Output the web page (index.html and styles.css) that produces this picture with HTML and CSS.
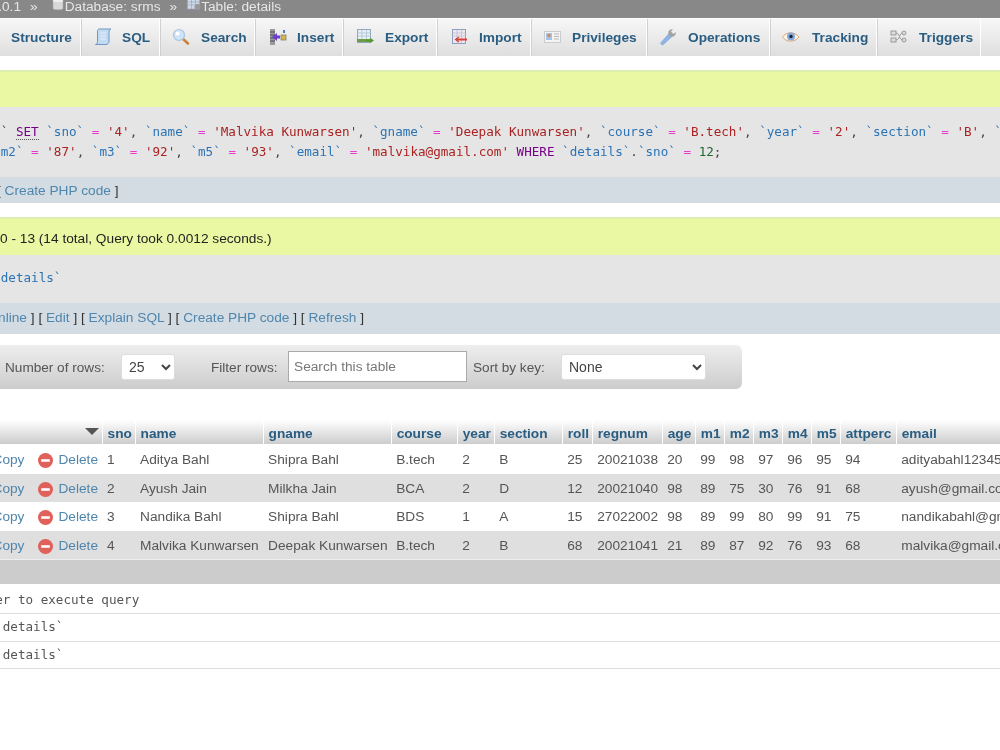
FILE: index.html
```html
<!DOCTYPE html>
<html lang="en">
<head>
<meta charset="utf-8">
<title>phpMyAdmin - details</title>
<link rel="stylesheet" href="styles.css">
</head>
<body>
<div class="page">
  <div class="crumbs">
    <span class="crumb-text first-crumb">Server: 127.0.0.1</span>
    <span class="crumb-sep">»</span>
    <svg class="crumb-icon" viewBox="0 0 14 14"><path d="M2 2.500C2 .8 12 .8 12 2.500v8c0 1.700-10 1.700-10 0z" fill="#d8d8d8" stroke="#aaa" stroke-width=".6"/><ellipse cx="7" cy="2.500" rx="5" ry="1.500" fill="#eee"/></svg>
    <span class="crumb-text">Database: srms</span>
    <span class="crumb-sep sep2">»</span>
    <svg class="crumb-icon tbl" viewBox="0 0 14 14"><rect x=".5" y="1" width="12" height="10" fill="#cfd8e6" stroke="#9ab" stroke-width=".7"/><path d="M.5 4h12M.5 7h12M4.500 1v10M8.500 1v10" stroke="#8fa3c0" stroke-width=".6"/><circle cx="10.500" cy="9" r="3" fill="#999"/></svg>
    <span class="crumb-text">Table: details</span>
  </div>

  <nav class="tabs">
    <a class="tab first">Structure</a>
    <a class="tab t-sql"><svg class="ti" viewBox="0 0 18 18"><path d="M5 1h12c-1 .5-2 1.500-2 3v9c0 2-1 3.500-3 3.500H1.500c1.500-.5 2-1.500 2-3V3C3.500 2 4 1.300 5 1z" fill="#c3daf3" stroke="#6d97c4"/><path d="M6 5h6M6 8h6M6 11h6" stroke="#e4effa"/></svg>SQL</a>
    <a class="tab t-search"><svg class="ti" viewBox="0 0 18 18"><path d="M10.500 10.500l5.500 5" stroke="#c8843c" stroke-width="2.600" stroke-linecap="round"/><circle cx="7" cy="7" r="5.500" fill="#cfe4f8" stroke="#a9c4dc" stroke-width="1.200"/><circle cx="5.500" cy="5.500" r="2" fill="#fff"/></svg>Search</a>
    <a class="tab t-insert"><svg class="ti" viewBox="0 0 18 18"><rect x="1" y="1" width="5" height="16" fill="#9a9a9a"/><path d="M1 4h5M1 7h5M1 10h5M1 13h5" stroke="#555"/><path d="M3 9l5-4v2.500h3v3H8V13z" fill="#6a3fd0"/><rect x="12" y="7" width="5" height="5" fill="#d8b84c" stroke="#776" stroke-width=".7"/><rect x="14" y="2" width="2" height="3" fill="#5577cc"/></svg>Insert</a>
    <a class="tab t-export"><svg class="ti" viewBox="0 0 18 18"><rect x="1.500" y="1.500" width="13" height="13" fill="#e6eef6" stroke="#8fa6bd"/><path d="M1.500 5h13M1.500 8h13M6 2v11M10.500 2v11" stroke="#a9bccf" stroke-width=".7"/><rect x="1" y="11" width="14" height="3" fill="#6d9b4a"/><path d="M10 12.500h6M14 10.500l3 2-3 2" stroke="#4e9a2e" fill="none" stroke-width="1.200"/></svg>Export</a>
    <a class="tab t-import"><svg class="ti" viewBox="0 0 18 18"><rect x="1.500" y="1.500" width="13" height="14" fill="#eee8ee" stroke="#8f9fc0"/><path d="M1.500 5h13M1.500 8h13M6 2v13M10.500 2v13" stroke="#b8b8cf" stroke-width=".7"/><path d="M5 11.500h11" stroke="#d6403a" stroke-width="2"/><path d="M8 9l-3.500 2.500L8 14" fill="none" stroke="#d6403a" stroke-width="1.200"/></svg>Import</a>
    <a class="tab t-priv"><svg class="ti" viewBox="0 0 18 18"><rect x=".5" y="3.500" width="16" height="11" fill="#f4f4f4" stroke="#ccc"/><rect x="2" y="5" width="6" height="7" fill="#a9c3e6"/><circle cx="5" cy="7.500" r="1.700" fill="#c98f62"/><path d="M10 6h5M10 8.500h5M10 11h5" stroke="#b6b6b6"/></svg>Privileges</a>
    <a class="tab t-oper"><svg class="ti" viewBox="0 0 18 18"><path d="M2 14.500L10 5.500 13 8.500 4.500 16.500c-1.500 1-3.500-.5-2.500-2z" fill="#8fb4e6" stroke="#7198cf" stroke-width=".5"/><path d="M9.500 6.500C8.500 3 11 .8 14 1.200l-2 2.300 2.500 2.500 2.300-2c.3 3-2 5.300-5 4.700z" fill="#a3a3a3"/></svg>Operations</a>
    <a class="tab t-track"><svg class="ti" viewBox="0 0 18 18"><path d="M.5 9C4 3.500 13 3.500 17 9c-4 5.500-13 5.500-16.500 0z" fill="#fdf4ea" stroke="#dba877"/><circle cx="9" cy="8.500" r="4" fill="#83a8dc"/><circle cx="9" cy="8.500" r="1.700" fill="#223"/></svg>Tracking</a>
    <a class="tab t-trig"><svg class="ti" viewBox="0 0 18 18"><rect x="1" y="3" width="5" height="4" fill="#ddd" stroke="#888" stroke-width=".8"/><rect x="1" y="10" width="5" height="4" fill="#ddd" stroke="#888" stroke-width=".8"/><path d="M6 5c4 0 3 7 7 7M6 12c4 0 3-7 7-7" fill="none" stroke="#999"/><circle cx="14" cy="5" r="2" fill="#ddd" stroke="#888" stroke-width=".8"/><circle cx="14" cy="12" r="2" fill="#ddd" stroke="#888" stroke-width=".8"/></svg>Triggers</a>
  </nav>

  <div class="notice n1"></div>
  <div class="sql s1"><pre class="code">UPDATE `details` <span class="kw u">SET</span> <span class="id">`sno`</span> <span class="op">=</span> <span class="str">'4'</span>, <span class="id">`name`</span> <span class="op">=</span> <span class="str">'Malvika Kunwarsen'</span>, <span class="id">`gname`</span> <span class="op">=</span> <span class="str">'Deepak Kunwarsen'</span>, <span class="id">`course`</span> <span class="op">=</span> <span class="str">'B.tech'</span>, <span class="id">`year`</span> <span class="op">=</span> <span class="str">'2'</span>, <span class="id">`section`</span> <span class="op">=</span> <span class="str">'B'</span>, <span class="id">`roll`</span>
 <span class="id">`m1` = '89', `m2`</span> <span class="op">=</span> <span class="str">'87'</span>, <span class="id">`m3`</span> <span class="op">=</span> <span class="str">'92'</span>, <span class="id">`m5`</span> <span class="op">=</span> <span class="str">'93'</span>, <span class="id">`email`</span> <span class="op">=</span> <span class="str">'malvika@gmail.com'</span> <span class="kw">WHERE</span> <span class="id">`details`</span>.<span class="id">`sno`</span> <span class="op">=</span> <span class="num">12</span>;</pre></div>
  <div class="links l1">[ <a>Create PHP code</a> ]</div>
  <div class="gap g1"></div>

  <div class="notice n2"><span class="shift-rows">Showing rows 0 - 13 (14 total, Query took 0.0012 seconds.)</span></div>
  <div class="sql s2"><pre class="code"><span class="kw">SELECT</span> * <span class="kw">FROM</span> <span class="id">`details`</span></pre></div>
  <div class="links l2"><span class="shift-inline">[ <a>Edit inline</a> ] [ <a>Edit</a> ] [ <a>Explain SQL</a> ] [ <a>Create PHP code</a> ] [ <a>Refresh</a> ]</span></div>

  <div class="toolbar">
    <label class="lbl l-rows">Number of rows:</label>
    <select class="sel sel-rows"><option>25</option></select>
    <label class="lbl l-filter">Filter rows:</label>
    <input class="search" placeholder="Search this table">
    <label class="lbl l-sort">Sort by key:</label>
    <select class="sel sel-key"><option>None</option></select>
  </div>

  <table class="data">
    <colgroup>
      <col class="c-act"><col class="c-sno"><col class="c-name"><col class="c-gname"><col class="c-course"><col class="c-year"><col class="c-section"><col class="c-roll"><col class="c-reg"><col class="c-age"><col class="c-m1"><col class="c-m2"><col class="c-m3"><col class="c-m4"><col class="c-m5"><col class="c-att"><col class="c-email">
    </colgroup>
    <thead>
      <tr><th class="sort-th"><span class="tri"></span></th><th>sno</th><th>name</th><th>gname</th><th>course</th><th>year</th><th>section</th><th>roll</th><th>regnum</th><th>age</th><th>m1</th><th>m2</th><th>m3</th><th>m4</th><th>m5</th><th>attperc</th><th>email</th></tr>
    </thead>
    <tbody>
      <tr class="r1"><td class="act"><div class="acts"><a>Copy</a><svg class="del" viewBox="0 0 14 14"><circle cx="7" cy="7" r="7" fill="#e0605a"/><rect x="3" y="5.800" width="8" height="2.400" fill="#fff"/></svg><a>Delete</a></div></td><td>1</td><td>Aditya Bahl</td><td>Shipra Bahl</td><td>B.tech</td><td>2</td><td>B</td><td>25</td><td>20021038</td><td>20</td><td>99</td><td>98</td><td>97</td><td>96</td><td>95</td><td>94</td><td>adityabahl12345@gmail.com</td></tr>
      <tr class="r2"><td class="act"><div class="acts"><a>Copy</a><svg class="del" viewBox="0 0 14 14"><circle cx="7" cy="7" r="7" fill="#e0605a"/><rect x="3" y="5.800" width="8" height="2.400" fill="#fff"/></svg><a>Delete</a></div></td><td>2</td><td>Ayush Jain</td><td>Milkha Jain</td><td>BCA</td><td>2</td><td>D</td><td>12</td><td>20021040</td><td>98</td><td>89</td><td>75</td><td>30</td><td>76</td><td>91</td><td>68</td><td>ayush@gmail.com</td></tr>
      <tr class="r3"><td class="act"><div class="acts"><a>Copy</a><svg class="del" viewBox="0 0 14 14"><circle cx="7" cy="7" r="7" fill="#e0605a"/><rect x="3" y="5.800" width="8" height="2.400" fill="#fff"/></svg><a>Delete</a></div></td><td>3</td><td>Nandika Bahl</td><td>Shipra Bahl</td><td>BDS</td><td>1</td><td>A</td><td>15</td><td>27022002</td><td>98</td><td>89</td><td>99</td><td>80</td><td>99</td><td>91</td><td>75</td><td>nandikabahl@gmail.com</td></tr>
      <tr class="r4"><td class="act"><div class="acts"><a>Copy</a><svg class="del" viewBox="0 0 14 14"><circle cx="7" cy="7" r="7" fill="#e0605a"/><rect x="3" y="5.800" width="8" height="2.400" fill="#fff"/></svg><a>Delete</a></div></td><td>4</td><td>Malvika Kunwarsen</td><td>Deepak Kunwarsen</td><td>B.tech</td><td>2</td><td>B</td><td>68</td><td>20021041</td><td>21</td><td>89</td><td>87</td><td>92</td><td>76</td><td>93</td><td>68</td><td>malvika@gmail.com</td></tr>
    </tbody>
  </table>
  <div class="table-foot"></div>

  <div class="console">
    <div class="cline"><pre class="code muted">Press Ctrl+Enter to execute query</pre></div>
    <div class="cline tall"><pre class="code muted">SELECT * FROM `details`</pre></div>
    <div class="cline"><pre class="code muted">SELECT * FROM `details`</pre></div>
  </div>
</div>
</body>
</html>
```
FILE: styles.css
```css
html, body { margin: 0; padding: 0; background: #fff; }
body { font-family: "Liberation Sans", Arial, sans-serif; font-size: 13.7px; color: #333; }
.page { width: 1000px; height: 750px; overflow: hidden; background: #fff; filter: blur(0.4px); }
a { color: #4f86ad; }
pre { margin: 0; }

.crumbs { height: 18px; background: #888; color: #e6e6e6; display: flex; align-items: flex-start; line-height: 13px; white-space: nowrap; overflow: hidden; font-size: 13.7px; }
.first-crumb { margin-left: -84px; }
.crumb-sep { margin: 0 13px 0 9px; }
.crumb-sep.sep2 { margin: 0 10px 0 9px; }
.crumb-icon { width: 14px; height: 14px; flex: none; margin-top: -2px; }

.tabs { height: 38px; display: flex; background: linear-gradient(#f7f7f7, #dedede); border-top: 1px solid #fff; box-sizing: border-box; white-space: nowrap; }
.tab { display: flex; align-items: center; font-weight: bold; font-size: 13.7px; color: #2a5d82; border-right: 1px solid #fff; box-shadow: 1px 0 0 #d0d0d0 inset; box-sizing: border-box; padding-bottom: 1px; }
.tab.first { width: 81px; padding-left: 11px; box-shadow: none; }
.ti { width: 18px; height: 18px; flex: none; margin-top: -1px; }
.t-sql { width: 79px; padding-left: 13px; gap: 10px; }
.t-search { width: 95px; padding-left: 12px; gap: 11px; }
.t-insert { width: 88px; padding-left: 14px; gap: 10px; }
.t-export { width: 94px; padding-left: 13px; gap: 11px; }
.t-import { width: 94px; padding-left: 14px; gap: 10px; }
.t-priv { width: 116px; padding-left: 13px; gap: 10px; }
.t-oper { width: 123px; padding-left: 12px; gap: 11px; }
.t-track { width: 107px; padding-left: 12px; gap: 12px; }
.t-trig { width: 104px; padding-left: 13px; gap: 11px; }

.notice { background: #eaf8a3; border-top: 2px solid #dcefb0; box-sizing: border-box; color: #222; white-space: nowrap; overflow: hidden; }
.n1 { height: 37px; margin-top: 14px; }
.n2 { height: 38px; line-height: 40px; }
.shift-rows { margin-left: -89px; }

.sql { background: #e5e5e5; overflow: hidden; white-space: nowrap; }
.s1 { height: 70px; padding-top: 15px; box-sizing: border-box; }
.s2 { height: 48px; padding-top: 13px; box-sizing: border-box; }
.code { font-family: "DejaVu Sans Mono", "Liberation Mono", monospace; font-size: 12.6px; line-height: 20px; margin-left: -113px; color: #444; }
.kw { color: #770088; }
.u { border-bottom: 1px dotted #555; }
.id { color: #2b73b5; }
.op { color: #e83ad0; }
.str { color: #aa2222; }
.num { color: #226633; }
.muted { color: #555; margin-left: -111px; }

.links { background: #d3dce3; white-space: nowrap; overflow: hidden; color: #333; }
.l1 { height: 26px; line-height: 27px; text-indent: -3px; }
.l2 { height: 31px; line-height: 30px; }
.shift-inline { margin-left: -40px; }
.gap { height: 14px; }
.g1 { background: #fff; }

.toolbar { width: 742px; height: 44px; margin-top: 11px; display: flex; align-items: center; background: linear-gradient(#eeeeee, #cccccc); border-radius: 0 6px 6px 0; box-sizing: border-box; color: #555; white-space: nowrap; }
.lbl { flex: none; font-size: 13.6px; }
.l-rows { margin-left: 5px; width: 116px; }
.l-filter { margin-left: 36px; width: 77px; }
.l-sort { margin-left: 6px; width: 88px; }
.sel { font-family: "Liberation Sans", Arial, sans-serif; font-size: 14px; height: 26px; background: #fff; border: 1px solid #ddd; border-radius: 3px; color: #444; padding: 0 0 0 3px; box-sizing: border-box; }
.sel-rows { width: 54px; }
.sel-key { width: 145px; }
.search { width: 179px; height: 31px; margin-top: -1px; box-sizing: border-box; border: 1px solid #aaa; font-family: "Liberation Sans", Arial, sans-serif; font-size: 13.7px; padding: 0 5px; color: #444; }
.search::placeholder { color: #777; opacity: 1; }

.data { table-layout: fixed; border-collapse: collapse; margin: 31px 0 0 -20px; width: 1117px; color: #555; white-space: nowrap; }
.c-act { width: 122px; } .c-sno { width: 33px; } .c-name { width: 128px; } .c-gname { width: 128px; }
.c-course { width: 66px; } .c-year { width: 37px; } .c-section { width: 68px; } .c-roll { width: 30px; }
.c-reg { width: 70px; } .c-age { width: 33px; } .c-m1 { width: 29px; } .c-m2 { width: 29px; } .c-m3 { width: 29px; }
.c-m4 { width: 29px; } .c-m5 { width: 29px; } .c-att { width: 56px; } .c-email { width: 200px; }
th { height: 24px; padding: 2px 0 0 5px; text-align: left; font-size: 13.7px; font-weight: bold; color: #2a5d82; background: linear-gradient(#ffffff, #cccccc); border-right: 1px solid #fff; box-sizing: border-box; overflow: hidden; }
.sort-th { text-align: right; padding-right: 3px; }
.tri { display: inline-block; width: 0; height: 0; border-left: 7px solid transparent; border-right: 7px solid transparent; border-top: 7px solid #555; margin-bottom: 3px; }
td { padding: 0 0 0 5px; box-sizing: border-box; overflow: hidden; }
.r1 { height: 30px; background: #fff; }
.r2 { height: 28px; background: #dfdfdf; }
.r3 { height: 29px; background: #fff; }
.r4 { height: 28px; background: #dfdfdf; }
.acts { display: flex; justify-content: flex-end; align-items: center; padding-right: 4px; }
.del { width: 15px; height: 15px; margin: 2px 5px 0 14px; flex: none; }
.table-foot { height: 25px; background: #cccccc; border-top: 1px solid #eee; box-sizing: border-box; }

.console { padding-top: 3px; }
.cline { height: 26px; border-bottom: 1px solid #ddd; white-space: nowrap; overflow: hidden; }
.cline.tall { height: 27px; }
.cline .code { line-height: 26px; }
```
